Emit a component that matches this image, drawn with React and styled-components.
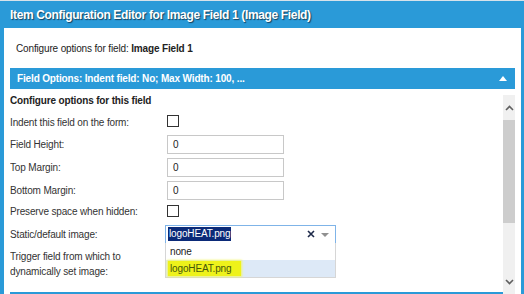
import React from "react";
import styled, { createGlobalStyle } from "styled-components";

const GlobalStyle = createGlobalStyle`
  html, body {
    margin: 0;
    padding: 0;
    background: #fff;
  }
  body {
    font-family: "Liberation Sans", Arial, sans-serif;
  }
`;

const Dialog = styled.div`
  width: 524px;
  height: 294px;
  box-sizing: border-box;
  background: #2a9ad8;
  border-top: 1px solid #d6e2ea;
  padding: 0 3px 0 4px;
  display: flex;
  flex-direction: column;
  overflow: hidden;
`;

const TitleBar = styled.div`
  height: 27px;
  flex: none;
  display: flex;
  align-items: center;
  padding-left: 6px;
  color: #fff;
  font-size: 12px;
  letter-spacing: -0.35px;
  font-weight: bold;
  text-shadow: 1px 1px 1px #163f5a;
`;

const Body = styled.div`
  flex: 1;
  background: #fff;
  padding: 0 6px;
  display: flex;
  flex-direction: column;
  min-height: 0;
`;

const Intro = styled.div`
  height: 40px;
  flex: none;
  display: flex;
  align-items: center;
  padding: 0 6px;
  font-size: 10px;
  letter-spacing: -0.15px;
  color: #222;
  b {
    font-weight: bold;
  }
`;

const SectionBar = styled.div`
  height: 21px;
  flex: none;
  background: #2a9ad8;
  color: #fff;
  font-size: 10px;
  letter-spacing: -0.15px;
  font-weight: bold;
  display: flex;
  align-items: center;
  justify-content: space-between;
  padding: 0 8px 0 7px;
`;

const UpTriangle = styled.span`
  width: 0;
  height: 0;
  border-left: 4px solid transparent;
  border-right: 4px solid transparent;
  border-bottom: 5px solid #fff;
`;

const Content = styled.div`
  flex: 1;
  display: flex;
  min-height: 0;
`;

const Form = styled.div`
  flex: 1;
  display: flex;
  flex-direction: column;
  overflow: hidden;
`;

const Heading = styled.div`
  height: 22px;
  flex: none;
  display: flex;
  align-items: center;
  font-size: 10px;
  letter-spacing: -0.15px;
  font-weight: bold;
  color: #222;
`;

const Row = styled.div`
  height: ${(p) => p.$h || 22}px;
  flex: none;
  display: flex;
  align-items: center;
  position: relative;
  z-index: ${(p) => (p.$raised ? 2 : "auto")};
`;

const Label = styled.div`
  width: 157px;
  flex: none;
  font-size: 10px;
  letter-spacing: -0.15px;
  color: #333;
  line-height: 15px;
`;

const Checkbox = styled.span`
  width: 10px;
  height: 10px;
  border: 1px solid #333;
  background: #fff;
  margin-top: -2px;
`;

const TextInput = styled.div`
  width: 110px;
  height: 17px;
  border: 1px solid #c8c8c8;
  font-size: 10px;
  color: #222;
  display: flex;
  align-items: center;
  padding-left: 5px;
`;

const Select = styled.div`
  box-sizing: border-box;
  width: 171px;
  height: 19px;
  margin-left: -2px;
  border: 1px solid #7fb4e8;
  display: flex;
  align-items: center;
  padding: 0 6px 0 2px;
  font-size: 10px;
  letter-spacing: -0.15px;
`;

const Selected = styled.span`
  background: #0b2a78;
  color: #fff;
  padding: 0 1px;
  line-height: 14px;
`;

const Spacer = styled.span`
  flex: 1;
`;

const Clear = styled.span`
  display: flex;
  margin-right: 6px;
`;

const DownTriangle = styled.span`
  width: 0;
  height: 0;
  border-left: 4px solid transparent;
  border-right: 4px solid transparent;
  border-top: 4px solid #909090;
  margin-top: 2px;
`;

const Dropdown = styled.div`
  position: absolute;
  left: 155px;
  top: 21px;
  box-sizing: border-box;
  width: 171px;
  border: 1px solid #d6d6d6;
  border-top: none;
  background: #fff;
  font-size: 10px;
  letter-spacing: -0.15px;
  color: #222;
`;

const Option = styled.div`
  height: 17px;
  display: flex;
  align-items: center;
  padding-left: 4px;
  background: ${(p) => (p.$active ? "#dde9f7" : "#fff")};
`;

const Marker = styled.span`
  background: #eef21a;
  color: #45560a;
  padding: 2px 10px 2px 2px;
  margin-left: -2px;
  box-shadow: 0 0 2px 1px #f2f56a;
`;

const NextSection = styled.div`
  height: 2px;
  flex: none;
  margin-top: auto;
  background: #2a9ad8;
`;

const Scrollbar = styled.div`
  width: 12px;
  flex: none;
  margin-top: 6px;
  background: #f0f0f0;
  display: flex;
  flex-direction: column;
  align-items: center;
`;

const Arrow = styled.div`
  height: 25px;
  flex: none;
  display: flex;
  align-items: center;
  justify-content: center;
`;

const Thumb = styled.div`
  width: 12px;
  height: 103px;
  background: #cdcdcd;
`;

function Chevron({ up }) {
  return (
    <svg width="9" height="6" viewBox="0 0 9 6">
      <path
        d={up ? "M1 5 L4.5 1.5 L8 5" : "M1 1 L4.5 4.5 L8 1"}
        fill="none"
        stroke="#606060"
        strokeWidth="1.6"
      />
    </svg>
  );
}

function ClearIcon() {
  return (
    <svg width="8" height="8" viewBox="0 0 8 8">
      <path d="M1 1 L7 7 M7 1 L1 7" stroke="#1e2a4a" strokeWidth="1.6" />
    </svg>
  );
}

export default function App() {
  return (
    <>
      <GlobalStyle />
      <Dialog>
        <TitleBar>Item Configuration Editor for Image Field 1 (Image Field)</TitleBar>
        <Body>
          <Intro>
            Configure options for field:&nbsp;<b>Image Field 1</b>
          </Intro>
          <SectionBar>
            Field Options: Indent field: No; Max Width: 100, ...
            <UpTriangle />
          </SectionBar>
          <Content>
            <Form>
              <Heading>Configure options for this field</Heading>
              <Row>
                <Label>Indent this field on the form:</Label>
                <Checkbox />
              </Row>
              <Row $h={23}>
                <Label>Field Height:</Label>
                <TextInput>0</TextInput>
              </Row>
              <Row $h={23}>
                <Label>Top Margin:</Label>
                <TextInput>0</TextInput>
              </Row>
              <Row>
                <Label>Bottom Margin:</Label>
                <TextInput>0</TextInput>
              </Row>
              <Row $h={21}>
                <Label>Preserve space when hidden:</Label>
                <Checkbox />
              </Row>
              <Row $h={24} $raised>
                <Label>Static/default image:</Label>
                <Select>
                  <Selected>logoHEAT.png</Selected>
                  <Spacer />
                  <Clear>
                    <ClearIcon />
                  </Clear>
                  <DownTriangle />
                </Select>
                <Dropdown>
                  <Option>none</Option>
                  <Option $active>
                    <Marker>logoHEAT.png</Marker>
                  </Option>
                </Dropdown>
              </Row>
              <Row $h={36}>
                <Label>
                  Trigger field from which to
                  <br />
                  dynamically set image:
                </Label>
              </Row>
              <NextSection />
            </Form>
            <Scrollbar>
              <Arrow>
                <Chevron up />
              </Arrow>
              <Thumb />
              <Spacer />
              <Arrow>
                <Chevron />
              </Arrow>
            </Scrollbar>
          </Content>
        </Body>
      </Dialog>
    </>
  );
}
